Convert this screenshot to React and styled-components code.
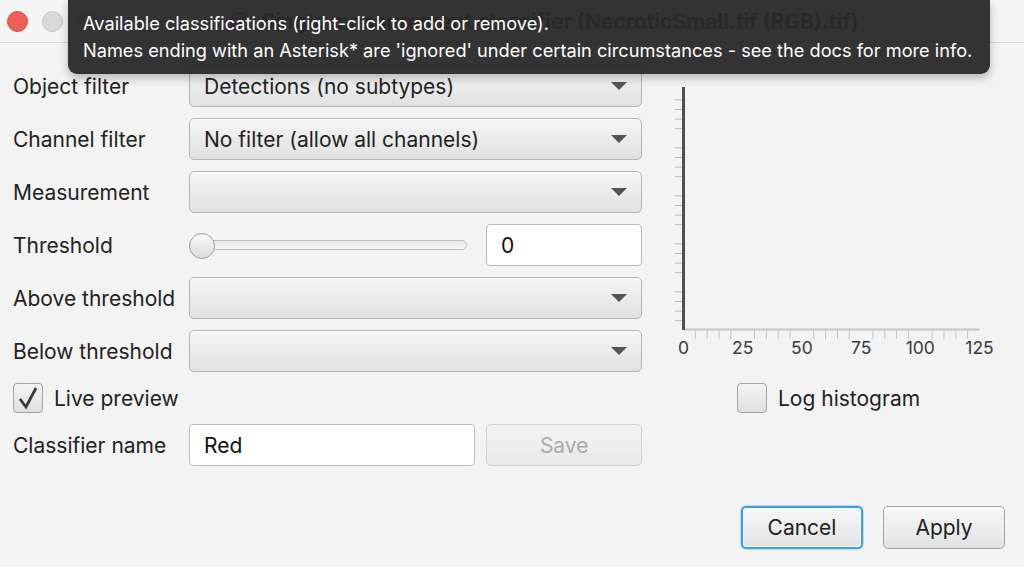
import React from 'react'
import styled, { createGlobalStyle } from 'styled-components'

const GlobalStyle = createGlobalStyle`
  html, body {
    margin: 0;
    padding: 0;
    background: #f3f3f3;
    overflow: hidden;
  }
  * { box-sizing: border-box; }
`

const Window = styled.div`
  position: relative;
  width: 1024px;
  height: 567px;
  background: #f3f3f3;
  font-family: Inter, "Liberation Sans", sans-serif;
  color: #222;
`

const TitleBar = styled.div`
  height: 43px;
  display: flex;
  align-items: center;
  padding-left: 7px;
  background: #f5f5f5;
  border-bottom: 1px solid #d6d6d6;
`

const Lights = styled.div`
  display: flex;
  gap: 14px;
`

const Light = styled.span`
  width: 21px;
  height: 21px;
  border-radius: 50%;
  background: ${p => p.$color};
  border: 1px solid ${p => p.$edge};
`

const TitleGroup = styled.div`
  flex: 1;
  display: flex;
  justify-content: center;
  align-items: center;
  gap: 10px;
  margin-left: -34px;
  font-size: 21px;
  font-weight: 700;
  color: #4a4a4a;
`

const Tooltip = styled.div`
  position: absolute;
  left: 68px;
  top: 0;
  width: 922px;
  height: 74px;
  padding: 10px 0 0 15px;
  background: rgba(38, 38, 38, 0.94);
  border-radius: 0 0 9px 9px;
  box-shadow: 0 4px 10px rgba(0, 0, 0, 0.25);
  color: #fff;
  font-size: 18.2px;
  line-height: 26.5px;
`

const Body = styled.div`
  padding: 22px 19px 0 13px;
`

const Form = styled.div`
  display: grid;
  grid-template-columns: 176px 453px 1fr;
  grid-template-rows: repeat(6, 42px) 30px 42px;
  row-gap: 11px;
`

const Label = styled.div`
  display: flex;
  align-items: center;
  font-size: 21px;
  white-space: nowrap;
`

const Combo = styled.div`
  display: flex;
  align-items: center;
  justify-content: space-between;
  padding: 0 14px 0 14px;
  border: 1px solid #b4b4b4;
  border-radius: 5px;
  background: linear-gradient(#f6f6f6, #e1e1e1);
  box-shadow: inset 0 1px 0 #fff;
  font-size: 21px;
  color: #222;
`

const Arrow = styled.span`
  width: 0;
  height: 0;
  border-left: 8px solid transparent;
  border-right: 8px solid transparent;
  border-top: 8px solid #555;
`

const ThresholdRow = styled.div`
  display: flex;
  align-items: center;
  gap: 19px;
`

const Slider = styled.div`
  position: relative;
  flex: 1;
  height: 10px;
  border: 1px solid #bdbdbd;
  border-radius: 5px;
  background: linear-gradient(#e9e9e9, #f7f7f7);
`

const Thumb = styled.span`
  position: absolute;
  left: -1px;
  top: -8px;
  width: 26px;
  height: 26px;
  border-radius: 50%;
  border: 1px solid #9e9e9e;
  background: linear-gradient(#fafafa, #dcdcdc);
`

const TextField = styled.div`
  display: flex;
  align-items: center;
  width: ${p => p.$width || '156px'};
  height: 42px;
  padding-left: 14px;
  background: #fff;
  border: 1px solid #bcbcbc;
  border-radius: 4px;
  font-size: 21px;
  color: #111;
`

const Chart = styled.svg`
  grid-column: 3;
  grid-row: 1 / span 6;
  display: block;
  margin-left: 28px;
`

const CheckRow = styled.label`
  grid-column: ${p => p.$col};
  display: flex;
  align-items: center;
  gap: 11px;
  height: 30px;
  margin-left: ${p => p.$indent || '0'};
  font-size: 21px;
`

const Box = styled.span`
  display: flex;
  align-items: center;
  justify-content: center;
  width: 30px;
  height: 30px;
  border: 1px solid #a5a5a5;
  border-radius: 4px;
  background: linear-gradient(#f4f4f4, #dfdfdf);
`

const NameRow = styled.div`
  grid-column: 2;
  display: flex;
  gap: 11px;
`

const Button = styled.button`
  width: ${p => p.$width || '122px'};
  height: ${p => p.$height || '43px'};
  font-family: inherit;
  font-size: 21px;
  border-radius: 5px;
  color: ${p => (p.disabled ? '#ababab' : '#222')};
  border: ${p => (p.$focus ? '2px solid #3b9fe2' : p.disabled ? '1px solid #d2d2d2' : '1px solid #a4a4a4')};
  background: ${p => (p.disabled ? 'linear-gradient(#f3f3f3, #e9e9e9)' : 'linear-gradient(#f8f8f8, #e2e2e2)')};
  box-shadow: ${p => (p.$focus ? 'inset 0 0 0 1px #ffffff, 0 0 0 1px #b9dcf4' : 'none')};
  padding: 0;
`

const Footer = styled.div`
  display: flex;
  justify-content: flex-end;
  gap: 20px;
  margin-top: 40px;
`

const X0 = 13.5
const XW = 296
const AXIS_Y = 264.5

function Histogram() {
  const yMinor = []
  for (let m = 0; m < 5; m++) {
    for (let k = 1; k <= 4; k++) {
      yMinor.push(25.3 + m * 48 + k * 9.6)
    }
  }
  const xMinor = []
  for (let k = 1; k < 25; k++) {
    if (k % 5 !== 0) xMinor.push(X0 + (XW / 25) * k)
  }
  const labels = [0, 25, 50, 75, 100, 125]
  return (
    <Chart width="335" height="308" viewBox="0 0 335 308">
      {yMinor.map(y => (
        <line key={y} x1="5" x2="12" y1={y} y2={y} stroke="#b9b9b9" strokeWidth="1" />
      ))}
      {xMinor.map(x => (
        <line key={x} x1={x} x2={x} y1="265" y2="274" stroke="#c2c2c2" strokeWidth="1" />
      ))}
      <line x1={X0} x2={X0 + XW} y1={AXIS_Y} y2={AXIS_Y} stroke="#c4c4c4" strokeWidth="2" />
      <line x1={X0} x2={X0} y1="22" y2="265" stroke="#4f4f4f" strokeWidth="3" />
      {labels.map((v, i) => (
        <text
          key={v}
          x={X0 + (XW / 5) * i}
          y="289"
          textAnchor="middle"
          fontSize="17.5"
          fill="#3a3a3a"
          fontFamily="Inter, 'Liberation Sans', sans-serif"
        >
          {v}
        </text>
      ))}
    </Chart>
  )
}

const rows = [
  ['Object filter', 'Detections (no subtypes)'],
  ['Channel filter', 'No filter (allow all channels)'],
  ['Measurement', ''],
]

export default function App() {
  return (
    <Window>
      <GlobalStyle />
      <TitleBar>
        <Lights>
          <Light $color="#ee5f57" $edge="#d8463f" />
          <Light $color="#d9d9d9" $edge="#c6c6c6" />
          <Light $color="#d9d9d9" $edge="#c6c6c6" />
        </Lights>
        <TitleGroup>
          <svg width="22" height="22" viewBox="0 0 22 22">
            <circle cx="11" cy="11" r="10" fill="#6a6a6a" />
            <circle cx="11" cy="11" r="6" fill="none" stroke="#cfcfcf" strokeWidth="2" />
            <path d="M11 5 L11 17 M5 11 L17 11" stroke="#cfcfcf" strokeWidth="1.5" />
          </svg>
          <span>Single measurement classifier (NecroticSmall.tif (RGB).tif)</span>
        </TitleGroup>
      </TitleBar>

      <Tooltip>
        <div>Available classifications (right-click to add or remove).</div>
        <div>Names ending with an Asterisk* are 'ignored' under certain circumstances - see the docs for more info.</div>
      </Tooltip>

      <Body>
        <Form>
          {rows.map(([label, value], i) => (
            <React.Fragment key={label}>
              <Label>{label}</Label>
              <Combo>
                <span>{value}</span>
                <Arrow />
              </Combo>
              {i === 0 && <Histogram />}
            </React.Fragment>
          ))}
          <Label>Threshold</Label>
          <ThresholdRow>
            <Slider>
              <Thumb />
            </Slider>
            <TextField>0</TextField>
          </ThresholdRow>
          <Label>Above threshold</Label>
          <Combo>
            <span />
            <Arrow />
          </Combo>
          <Label>Below threshold</Label>
          <Combo>
            <span />
            <Arrow />
          </Combo>

          <CheckRow $col="1 / span 2">
            <Box>
              <svg width="22" height="24" viewBox="0 0 22 24">
                <path d="M3 13 L9 21 L19 2" fill="none" stroke="#3a3a3a" strokeWidth="2.8" strokeLinejoin="miter" />
              </svg>
            </Box>
            Live preview
          </CheckRow>
          <CheckRow $col="3" $indent="95px">
            <Box />
            Log histogram
          </CheckRow>

          <Label>Classifier name</Label>
          <NameRow>
            <TextField $width="287px">Red</TextField>
            <Button disabled $width="156px" $height="42px">Save</Button>
          </NameRow>
        </Form>
        <Footer>
          <Button $focus>Cancel</Button>
          <Button>Apply</Button>
        </Footer>
      </Body>
    </Window>
  )
}
